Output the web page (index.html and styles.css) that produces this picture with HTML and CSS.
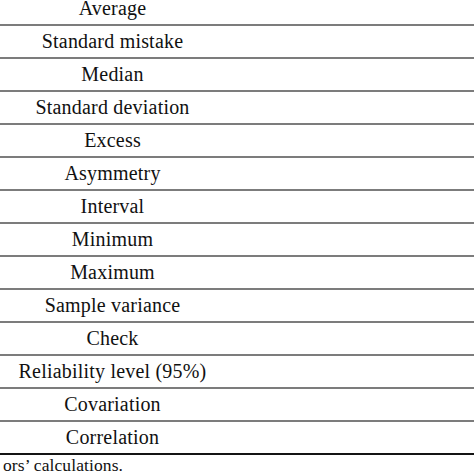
FILE: index.html
```html
<!DOCTYPE html>
<html lang="en">
<head>
<meta charset="utf-8">
<title>Statistics</title>
<link rel="stylesheet" href="styles.css">
</head>
<body>
<div class="page">
  <div class="table">
    <div class="row"><div class="label">Average</div><div class="value"></div></div>
    <div class="row"><div class="label">Standard mistake</div><div class="value"></div></div>
    <div class="row"><div class="label">Median</div><div class="value"></div></div>
    <div class="row"><div class="label">Standard deviation</div><div class="value"></div></div>
    <div class="row"><div class="label">Excess</div><div class="value"></div></div>
    <div class="row"><div class="label">Asymmetry</div><div class="value"></div></div>
    <div class="row"><div class="label">Interval</div><div class="value"></div></div>
    <div class="row"><div class="label">Minimum</div><div class="value"></div></div>
    <div class="row"><div class="label">Maximum</div><div class="value"></div></div>
    <div class="row"><div class="label">Sample variance</div><div class="value"></div></div>
    <div class="row"><div class="label">Check</div><div class="value"></div></div>
    <div class="row"><div class="label">Reliability level (95%)</div><div class="value"></div></div>
    <div class="row"><div class="label">Covariation</div><div class="value"></div></div>
    <div class="row"><div class="label">Correlation</div><div class="value"></div></div>
  </div>
  <p class="note">ors’ calculations.</p>
</div>
</body>
</html>
```
FILE: styles.css
```css
html, body {
  margin: 0;
  padding: 0;
  background: #ffffff;
}
body {
  width: 474px;
  height: 474px;
  overflow: hidden;
  font-family: "Liberation Serif", "Times New Roman", serif;
  color: #111111;
}
.page {
  margin-top: -9px;
}
.table {
  display: flex;
  flex-direction: column;
  border-bottom: 2px solid #141414;
}
.row {
  display: grid;
  grid-template-columns: 225px 1fr;
  border-top: 2px solid #7c7c7c;
}
.label {
  text-align: center;
  font-size: 20px;
  line-height: 30px;
  padding-bottom: 1px;
  letter-spacing: 0.2px;
  white-space: nowrap;
}
.note {
  margin: 0;
  padding-left: 3px;
  font-size: 17.5px;
  line-height: 20px;
  letter-spacing: 0.1px;
}
```
